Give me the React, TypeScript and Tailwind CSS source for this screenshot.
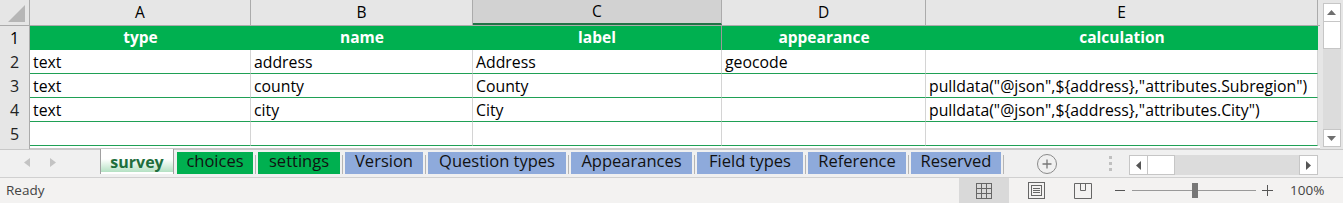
import React from "react";

const COLS = [
  { key: "A", w: 222 },
  { key: "B", w: 222 },
  { key: "C", w: 249 },
  { key: "D", w: 204 },
  { key: "E", w: 392 },
];

const HEAD = ["type", "name", "label", "appearance", "calculation"];
const ROWS: string[][] = [
  ["text", "address", "Address", "geocode", ""],
  ["text", "county", "County", "", 'pulldata("@json",${address},"attributes.Subregion")'],
  ["text", "city", "City", "", 'pulldata("@json",${address},"attributes.City")'],
  ["", "", "", "", ""],
];

const cellFont = { fontFamily: "'Open Sans', sans-serif" };

const TABS: { name: string; w: number; kind: "active" | "green" | "blue"; gap: number }[] = [
  { name: "survey", w: 74, kind: "active", gap: 0 },
  { name: "choices", w: 76, kind: "green", gap: 3 },
  { name: "settings", w: 82, kind: "green", gap: 5 },
  { name: "Version", w: 78, kind: "blue", gap: 5 },
  { name: "Question types", w: 138, kind: "blue", gap: 5 },
  { name: "Appearances", w: 121, kind: "blue", gap: 5 },
  { name: "Field types", w: 106, kind: "blue", gap: 5 },
  { name: "Reference", w: 98, kind: "blue", gap: 5 },
  { name: "Reserved", w: 90, kind: "blue", gap: 5 },
];

function Sheet() {
  return (
    <div className="flex h-[149px] bg-[#e6e6e6]">
      <div className="w-[1320px] flex flex-col">
        <div className="flex h-[26px] border-b border-[#ababab] bg-[#e6e6e6]">
          <div className="w-[30px] h-full border-r border-[#ababab] relative overflow-hidden">
            <svg width="30" height="25" className="absolute left-0 top-0">
              <polygon points="25,5 25,22 8,22" fill="#b6b6b6" />
            </svg>
          </div>
          {COLS.map((c) => (
            <div
              key={c.key}
              style={{ width: c.key === "A" ? c.w - 1 : c.w }}
              className={
                "h-full flex items-center justify-center text-black border-r border-[#ababab] " +
                (c.key === "C" ? "bg-[#d2d2d2] border-b-2 border-b-[#217346]" : "")
              }
            >
              <span style={{ fontFamily: "'Open Sans', sans-serif" }} className="text-[15.5px] leading-none">
                {c.key}
              </span>
            </div>
          ))}
        </div>
        <div className="flex h-[24px]">
          <div className="w-[30px] border-r border-[#ababab] flex items-center justify-center text-[16px] bg-[#e6e6e6]" style={{ fontFamily: "'Open Sans', sans-serif" }}>
            1
          </div>
          {COLS.map((c, i) => (
            <div
              key={c.key}
              style={{ width: c.key === "A" ? c.w - 1 : c.w, ...cellFont }}
              className={
                "bg-[#00b050] text-white font-bold text-[15.5px] flex items-center justify-center " +
                (c.key === "C" ? "border-r border-[#9a9a9a]" : "")
              }
            >
              {HEAD[i]}
            </div>
          ))}
        </div>
        {ROWS.map((r, ri) => (
          <div key={ri} className="flex h-[24px]">
            <div
              className="w-[30px] border-r border-[#ababab] flex items-center justify-center text-[16px] bg-[#e6e6e6] text-[#222]"
              style={{ fontFamily: "'Open Sans', sans-serif" }}
            >
              {ri + 2}
            </div>
            {COLS.map((c, i) => (
              <div
                key={c.key}
                style={{ width: c.key === "A" ? c.w - 1 : c.w, ...cellFont }}
                className="bg-white border-b border-[#1fa055] border-r border-r-[#d4d4d4] text-[15.8px] leading-[22px] text-black flex items-end pl-[3px] whitespace-nowrap overflow-visible"
              >
                {r[i]}
              </div>
            ))}
          </div>
        ))}
        <div className="flex h-[3px]">
          <div className="w-[30px] border-r border-[#ababab] bg-[#e6e6e6]" />
          <div className="flex-1 bg-white border-b border-[#c8c8c8]" />
        </div>
      </div>
      <div className="w-[23px] flex flex-col items-center pt-[3px] pb-[2px] bg-[#e6e6e6]">
        <div className="w-[18px] h-[19px] bg-white border border-[#c6c6c6] flex items-center justify-center">
          <svg width="9" height="5"><polygon points="0,5 9,5 4.5,0" fill="#6f6f6f" /></svg>
        </div>
        <div className="w-[18px] h-[27px] bg-white border-x border-b border-[#c6c6c6]" />
        <div className="w-[18px] flex-1 bg-[#dcdcdc]" />
        <div className="w-[18px] h-[18px] bg-white border border-[#c6c6c6] flex items-center justify-center">
          <svg width="9" height="5"><polygon points="0,0 9,0 4.5,5" fill="#6f6f6f" /></svg>
        </div>
      </div>
    </div>
  );
}

function TabBar() {
  return (
    <div className="flex h-[29px] bg-[#f0f0f0] border-b border-[#d0d0d0] border-t border-t-[#c8c8c8]" style={{ fontFamily: "'Open Sans', sans-serif" }}>
      <div className="w-[100px] flex items-center gap-[20px] pl-[24px] pb-[3px]">
        <svg width="6" height="9"><polygon points="6,0 6,9 0,4.5" fill="#c3c3c3" /></svg>
        <svg width="6" height="9"><polygon points="0,0 0,9 6,4.5" fill="#c3c3c3" /></svg>
      </div>
      <div className="flex items-start">
        {TABS.map((t, i) => (
          <React.Fragment key={t.name}>
            {i > 0 && (
              <div style={{ width: t.gap }} className="h-[26px] flex justify-center pt-[5px]">
                {i > 1 && <div className="w-px h-[19px] bg-[#b5b5b5]" />}
              </div>
            )}
            {t.kind === "active" ? (
              <div
                style={{ width: t.w }}
                className="h-[25px] -mt-[1px] bg-gradient-to-b from-white from-40% to-[#a8dcba] border-l border-r border-[#a0a0a0] flex items-center justify-center text-[16px] font-bold text-[#1e6e3c] shadow-[inset_0_-2px_0_#fff]"
              >
                survey
              </div>
            ) : (
              <div
                style={{ width: t.w }}
                className={
                  "h-[22px] mt-[2px] flex items-center justify-center text-[16.5px] text-[#111] " +
                  (t.kind === "green" ? "bg-[#00b050]" : "bg-[#8eaadb]")
                }
              >
                <span className="-mt-[3px]">{t.name}</span>
              </div>
            )}
          </React.Fragment>
        ))}
        <div className="w-[5px] h-[26px] flex justify-center pt-[5px]">
          <div className="w-px h-[19px] bg-[#b5b5b5]" />
        </div>
      </div>
      <div className="w-[31px]" />
      <div className="w-[20px] h-[20px] mt-[4px] rounded-full border border-[#8a8a8a] flex items-center justify-center">
        <svg width="10" height="10"><path d="M5 0.5V9.5M0.5 5H9.5" stroke="#777" strokeWidth="1.3" /></svg>
      </div>
      <div className="w-[56px] flex justify-end pr-[1px] pt-[6px]">
        <div className="flex flex-col gap-[3px]">
          <div className="w-[3px] h-[3px] bg-[#c0c0c0]" />
          <div className="w-[3px] h-[3px] bg-[#c0c0c0]" />
          <div className="w-[3px] h-[3px] bg-[#c0c0c0]" />
        </div>
      </div>
      <div className="w-[16px]" />
      <div className="w-[189px] h-[20px] mt-[5px] flex bg-[#dcdcdc]">
        <div className="w-[19px] h-full bg-white border border-[#c6c6c6] flex items-center justify-center">
          <svg width="5" height="9"><polygon points="5,0 5,9 0,4.5" fill="#555" /></svg>
        </div>
        <div className="w-[27px] h-full bg-white border-y border-r border-[#c6c6c6]" />
        <div className="flex-1" />
        <div className="w-[19px] h-full bg-white border border-[#c6c6c6] flex items-center justify-center">
          <svg width="5" height="9"><polygon points="0,0 0,9 5,4.5" fill="#555" /></svg>
        </div>
      </div>
    </div>
  );
}

function StatusBar() {
  return (
    <div className="flex h-[25px] bg-[#f3f2f1] items-center text-[#444]" style={{ fontFamily: "'Open Sans', sans-serif" }}>
      <div className="flex-1 pl-[6px] text-[13.5px] text-[#444]">Ready</div>
      <div className="w-[50px] h-[25px] bg-[#d9d9d9] flex items-center justify-center">
        <svg width="16" height="16" viewBox="0 0 16 16">
          <rect x="0.5" y="0.5" width="15" height="15" fill="none" stroke="#666" />
          <path d="M5.5 0.5V15.5M10.5 0.5V15.5M0.5 5.5H15.5M0.5 10.5H15.5" stroke="#666" />
        </svg>
      </div>
      <div className="w-[54px] flex items-center justify-center">
        <svg width="17" height="17" viewBox="0 0 17 17">
          <rect x="0.5" y="0.5" width="16" height="16" fill="none" stroke="#666" />
          <rect x="3.5" y="3.5" width="10" height="10" fill="none" stroke="#666" />
          <path d="M5 6.5H12M5 8.5H12M5 10.5H12" stroke="#666" />
        </svg>
      </div>
      <div className="w-[40px] flex items-center justify-center">
        <svg width="18" height="16" viewBox="0 0 18 16">
          <path d="M0.5 0.5V15.5H17.5V0.5" fill="none" stroke="#666" />
          <path d="M0.5 0.5H17.5M6.5 0.5V7.5M6.5 7.5H11.5V0.5" fill="none" stroke="#666" />
        </svg>
      </div>
      <div className="w-[12px]" />
      <div className="w-[10px] h-px bg-[#555]" />
      <div className="w-[7px]" />
      <div className="relative w-[124px] h-px bg-[#999]">
        <div className="absolute left-[60px] -top-[7px] w-[6px] h-[15px] bg-[#777]" />
      </div>
      <div className="w-[6px]" />
      <svg width="11" height="11"><path d="M5.5 0V11M0 5.5H11" stroke="#555" /></svg>
      <div className="w-[17px]" />
      <div className="text-[13.5px] text-[#444] w-[53px]">100%</div>
    </div>
  );
}

export default function App() {
  return (
    <div className="w-[1343px] h-[203px] overflow-hidden bg-[#f3f2f1]">
      <Sheet />
      <TabBar />
      <StatusBar />
    </div>
  );
}
